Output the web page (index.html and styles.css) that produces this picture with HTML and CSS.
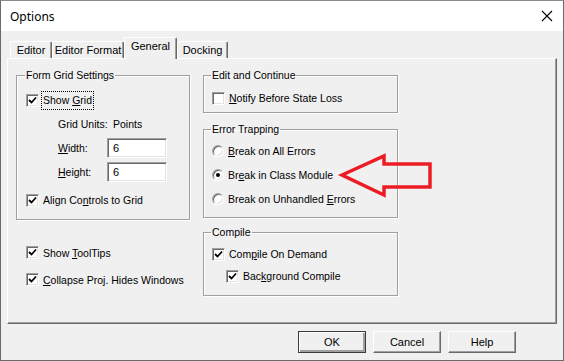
FILE: index.html
```html
<!DOCTYPE html>
<html lang="en">
<head>
<meta charset="UTF-8">
<title>Options</title>
<link rel="stylesheet" href="styles.css">
</head>
<body>
<div class="window">
  <div class="titlebar">
    <span class="title">Options</span>
    <svg class="close" width="12" height="12" viewBox="0 0 12 12"><path d="M1 1 L11 11 M11 1 L1 11" stroke="#000" stroke-width="1.1" fill="none"/></svg>
  </div>
  <div class="client">
    <div class="tabs">
      <div class="tab tab-editor">Editor</div>
      <div class="tab tab-format">Editor Format</div>
      <div class="tab tab-general selected">General</div>
      <div class="tab tab-docking">Docking</div>
    </div>
    <div class="panel">
      <div class="col-left">
        <fieldset class="group grid-group">
          <legend>Form Grid Settings</legend>
          <div class="row"><span class="check on"><svg viewBox="0 0 9 9"><path d="M1 4 L3.5 6.5 L8 1.5" stroke="#000" stroke-width="1.8" fill="none"/></svg></span><span class="focus">Show <u>G</u>rid</span></div>
          <div class="row indent"><span class="lbl units">Grid Units:</span><span>Points</span></div>
          <div class="row indent"><span class="lbl"><u>W</u>idth:</span><span class="field">6</span></div>
          <div class="row indent"><span class="lbl"><u>H</u>eight:</span><span class="field">6</span></div>
          <div class="row align-row"><span class="check on"><svg viewBox="0 0 9 9"><path d="M1 4 L3.5 6.5 L8 1.5" stroke="#000" stroke-width="1.8" fill="none"/></svg></span><span>Align Co<u>n</u>trols to Grid</span></div>
        </fieldset>
        <div class="row loose tips-row"><span class="check on"><svg viewBox="0 0 9 9"><path d="M1 4 L3.5 6.5 L8 1.5" stroke="#000" stroke-width="1.8" fill="none"/></svg></span><span>Show <u>T</u>oolTips</span></div>
        <div class="row loose"><span class="check on"><svg viewBox="0 0 9 9"><path d="M1 4 L3.5 6.5 L8 1.5" stroke="#000" stroke-width="1.8" fill="none"/></svg></span><span><u>C</u>ollapse Proj. Hides Windows</span></div>
      </div>
      <div class="col-right">
        <fieldset class="group edit-group">
          <legend>Edit and Continue</legend>
          <div class="row"><span class="check"></span><span><u>N</u>otify Before State Loss</span></div>
        </fieldset>
        <fieldset class="group error-group">
          <legend>Error Trapping</legend>
          <div class="row"><span class="radio"></span><span><u>B</u>reak on All Errors</span></div>
          <div class="row"><span class="radio on"></span><span>Br<u>e</u>ak in Class Module</span></div>
          <div class="row"><span class="radio"></span><span>Break on Unhandled <u>E</u>rrors</span></div>
        </fieldset>
        <fieldset class="group compile-group">
          <legend>Compile</legend>
          <div class="row short"><span class="check on"><svg viewBox="0 0 9 9"><path d="M1 4 L3.5 6.5 L8 1.5" stroke="#000" stroke-width="1.8" fill="none"/></svg></span><span>Com<u>p</u>ile On Demand</span></div>
          <div class="row short sub"><span class="check on"><svg viewBox="0 0 9 9"><path d="M1 4 L3.5 6.5 L8 1.5" stroke="#000" stroke-width="1.8" fill="none"/></svg></span><span>Bac<u>k</u>ground Compile</span></div>
        </fieldset>
      </div>
    </div>
    <div class="buttons">
      <span class="btn default">OK</span>
      <span class="btn">Cancel</span>
      <span class="btn">Help</span>
    </div>
  </div>
  <svg class="arrow" width="564" height="361" viewBox="0 0 564 361"><polygon points="342,175 384,156 384,164 430,164 430,187 384,187 384,195" fill="none" stroke="#ed1c24" stroke-width="3.5" stroke-linejoin="miter"/></svg>
</div>
</body>
</html>
```

FILE: styles.css
```css
html, body {
  margin: 0;
  padding: 0;
}

body {
  font-family: "Liberation Sans", Arial, sans-serif;
  font-size: 10.5px;
  color: #000;
  background: #fff;
  white-space: nowrap;
}

.window {
  position: relative;
  width: 564px;
  height: 361px;
  box-sizing: border-box;
  border: 1px solid #6a6a6a;
  border-top-color: #8a8a8a;
  background: #f0f0f0;
}

.titlebar {
  height: 30px;
  background: #fff;
  display: flex;
  align-items: center;
  justify-content: space-between;
  padding: 0 9px 0 9px;
}

.title {
  font-family: "Noto Sans", "Open Sans", sans-serif;
  font-size: 12px;
}

.close {
  margin-right: 1px;
}

.client {
  padding: 6px 6px 0 6px;
}

/* tabs */
.tabs {
  display: flex;
  align-items: flex-end;
  height: 21px;
  padding-left: 3px;
}

.tab {
  box-sizing: border-box;
  height: 17px;
  line-height: 16px;
  text-align: center;
  border-top: 1px solid #fff;
  border-left: 1px solid #fff;
  border-right: 1px solid #696969;
  box-shadow: inset -1px 0 0 #a0a0a0;
  border-radius: 2px 2px 0 0;
  font-size: 11px;
}

.tab-editor { width: 42px; }
.tab-format { width: 72px; }
.tab-general { width: 53px; }
.tab-docking { width: 51px; }

.tab.selected {
  height: 22px;
  margin-bottom: -1px;
  line-height: 17px;
  background: #f0f0f0;
  position: relative;
  z-index: 1;
}

.panel {
  height: 266px;
  box-sizing: border-box;
  border-top: 1px solid #fff;
  border-left: 1px solid #fff;
  border-right: 1px solid #696969;
  border-bottom: 1px solid #696969;
  box-shadow: inset -1px -1px 0 #a0a0a0;
  padding: 9px 0 0 8px;
  display: flex;
  gap: 13px;
}

.col-left {
  width: 174px;
}

.col-right {
  width: 195px;
}

/* group boxes */
.group {
  margin: 0;
  border: 1px solid #a0a0a0;
  box-shadow: inset 1px 1px 0 #fff, 1px 1px 0 #fff;
  padding: 0 0 0 9px;
  min-width: 0;
}

.group legend {
  padding: 0 1px;
  margin-left: -1px;
  line-height: 14px;
}

.grid-group {
  padding-top: 6px;
  padding-bottom: 7px;
}

.col-right .group {
  padding-left: 8px;
}

.edit-group {
  padding-top: 4px;
  padding-bottom: 2px;
}

.error-group {
  margin-top: 9px;
  padding-top: 3px;
  padding-bottom: 6px;
}

.compile-group {
  margin-top: 7px;
  padding-top: 4px;
  padding-bottom: 8px;
}

/* rows */
.row {
  height: 24px;
  display: flex;
  align-items: center;
}

.row.short {
  height: 22px;
}

.row.sub {
  padding-left: 14px;
}

.row.indent {
  padding-left: 32px;
}

.align-row {
  margin-top: 4px;
}

.row.loose {
  height: 27px;
  padding-left: 10px;
}

.tips-row {
  margin-top: 19px;
}

.lbl {
  flex: none;
  width: 49px;
}

.lbl.units {
  width: 55px;
}

.focus {
  outline: 1px dotted #000;
  outline-offset: 0;
  padding: 2px 1px 3px 1px;
  margin-left: -1px;
}

/* check boxes */
.check {
  flex: none;
  box-sizing: border-box;
  width: 13px;
  height: 13px;
  margin-right: 4px;
  background: #fff;
  border-top: 1px solid #a0a0a0;
  border-left: 1px solid #a0a0a0;
  border-right: 1px solid #fff;
  border-bottom: 1px solid #fff;
  box-shadow: inset 1px 1px 0 #696969, inset -1px -1px 0 #e3e3e3;
  display: flex;
  align-items: center;
  justify-content: center;
}

.check svg {
  width: 9px;
  height: 9px;
}

/* radio buttons */
.radio {
  flex: none;
  box-sizing: border-box;
  width: 12px;
  height: 12px;
  margin-right: 4px;
  border-radius: 50%;
  background: #fff;
  border: 1px solid;
  border-color: #a0a0a0 #fff #fff #a0a0a0;
  box-shadow: inset 1px 1px 0 #696969, inset -1px -1px 0 #e3e3e3;
  display: flex;
  align-items: center;
  justify-content: center;
}

.radio.on::after {
  content: "";
  width: 4px;
  height: 4px;
  border-radius: 50%;
  background: #000;
}

/* text fields */
.field {
  flex: none;
  box-sizing: border-box;
  width: 60px;
  height: 20px;
  background: #fff;
  border-top: 1px solid #a0a0a0;
  border-left: 1px solid #a0a0a0;
  border-right: 1px solid #fff;
  border-bottom: 1px solid #fff;
  box-shadow: inset 1px 1px 0 #696969, inset -1px -1px 0 #e3e3e3;
  padding-left: 5px;
  line-height: 18px;
  font-size: 11px;
}

/* buttons */
.buttons {
  display: flex;
  justify-content: flex-end;
  gap: 7px;
  margin-top: 7px;
  padding-right: 41px;
}

.btn {
  box-sizing: border-box;
  width: 68px;
  height: 22px;
  display: flex;
  align-items: center;
  justify-content: center;
  border-top: 1px solid #fff;
  border-left: 1px solid #fff;
  border-right: 1px solid #696969;
  border-bottom: 1px solid #696969;
  box-shadow: inset -1px -1px 0 #a0a0a0;
  font-size: 11px;
}

.btn.default {
  border: 1px solid #3c3c3c;
  box-shadow: inset 1px 1px 0 #fff, inset -2px -2px 0 #a0a0a0;
}

/* annotation arrow drawn over the dialog */
.arrow {
  position: absolute;
  left: -1px;
  top: -1px;
  pointer-events: none;
}
```
